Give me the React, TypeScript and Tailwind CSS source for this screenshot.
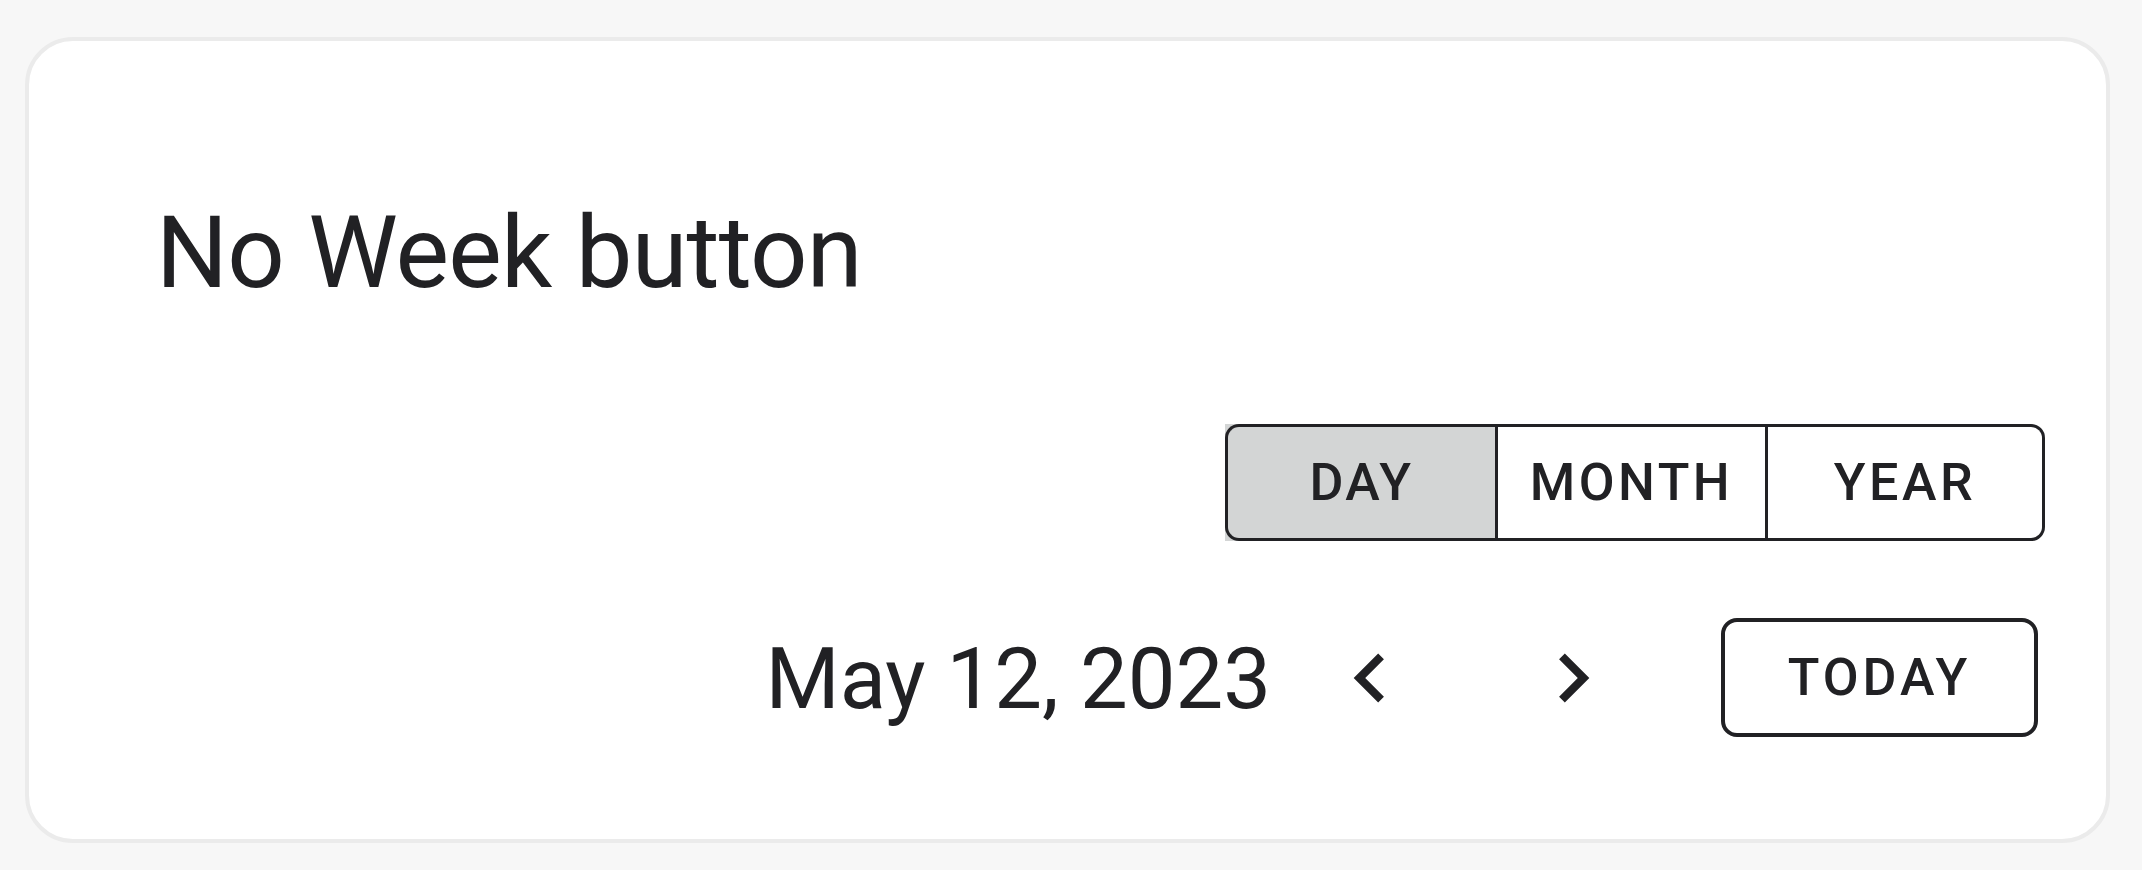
const ink = "text-[#212124]";

function Chevron({ dir }: { dir: "left" | "right" }) {
  // material-style filled chevron
  const d =
    dir === "left"
      ? "M15.41 7.41 14 6l-6 6 6 6 1.41-1.41L10.83 12z"
      : "M10 6 8.59 7.41 13.17 12l-4.58 4.59L10 18l6-6z";
  return (
    <button className="w-[98px] h-[98px] flex items-center justify-center">
      <svg viewBox="0 0 24 24" className="w-[98px] h-[98px] fill-[#212124]">
        <path d={d} />
      </svg>
    </button>
  );
}

export default function App() {
  return (
    <div className="min-h-[870px] bg-[#f7f7f7] pt-[37px] pl-[25px] pr-[32px] font-['Roboto',sans-serif]">
      <div className="h-[806px] bg-white border-[4px] border-[#ebebeb] rounded-[48px] flex flex-col">
        <h1 className={`pl-[127px] pt-[152px] text-[101px] leading-[120px] font-normal tracking-[-0.8px] ${ink}`}>
          No Week button
        </h1>

        <div className="flex justify-end pr-[61px] mt-[111px]">
          <div className="flex h-[117px]">
            <div className="bg-[#d3d5d5]">
              <button
                className={`w-[270px] h-full rounded-l-[14px] border-[3px] border-r-0 border-[#212124] bg-[#d3d5d5] text-[52px] font-medium tracking-[2.5px] ${ink}`}
              >
                DAY
              </button>
            </div>
            <button
              className={`w-[273px] h-full border-[3px] border-[#212124] bg-white text-[52px] font-medium tracking-[3.5px] ${ink}`}
            >
              MONTH
            </button>
            <button
              className={`w-[277px] h-full rounded-r-[14px] border-[3px] border-l-0 border-[#212124] bg-white text-[52px] font-medium tracking-[3.5px] ${ink}`}
            >
              YEAR
            </button>
          </div>
        </div>

        <div className="flex justify-end items-center pr-[68px] mt-[77px]">
          <span className={`text-[85px] leading-none pt-[3px] ${ink}`}>May 12, 2023</span>
          <div className="ml-[50px]">
            <Chevron dir="left" />
          </div>
          <div className="ml-[105px]">
            <Chevron dir="right" />
          </div>
          <button
            className={`ml-[99px] w-[317px] h-[119px] rounded-[16px] border-[4px] border-[#212124] text-[52px] font-medium tracking-[4px] ${ink}`}
          >
            TODAY
          </button>
        </div>
      </div>
    </div>
  );
}
